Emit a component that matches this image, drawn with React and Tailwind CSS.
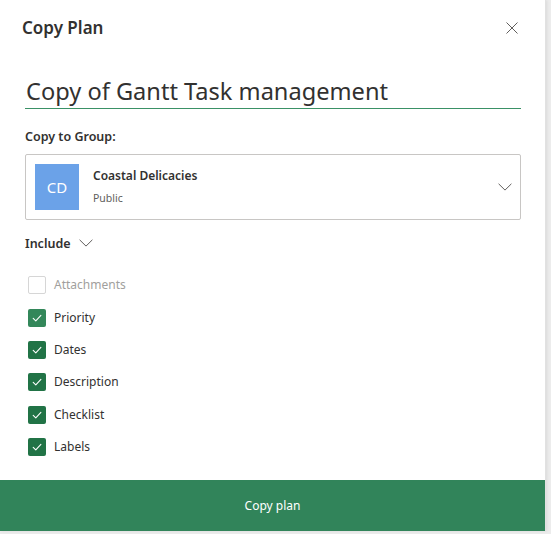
import React from "react";

const font = { fontFamily: '"Segoe UI", "Noto Sans", "Open Sans", sans-serif' };

function Check({ checked, light }) {
  if (!checked) {
    return (
      <span className="w-[18px] h-[18px] rounded-[2px] border border-[#d6d6d6] bg-white shrink-0" />
    );
  }
  return (
    <span
      className={
        "w-[18px] h-[18px] rounded-[2px] flex items-center justify-center shrink-0 " +
        (light ? "bg-[#33875a]" : "bg-[#217346]")
      }
    >
      <svg width="12" height="12" viewBox="0 0 12 12" fill="none">
        <path d="M2.2 6.3 L4.8 8.8 L9.9 3.4" stroke="white" strokeWidth="1.1" strokeLinecap="round" strokeLinejoin="round" />
      </svg>
    </span>
  );
}

function Chevron({ w = 14, h = 8, color = "#605e5c" }) {
  return (
    <svg width={w} height={h} viewBox="0 0 14 8" fill="none">
      <path d="M0.6 0.8 L7 7.1 L13.4 0.8" stroke={color} strokeWidth="1" />
    </svg>
  );
}

export default function App() {
  const items = [
    { label: "Attachments", checked: false },
    { label: "Priority", checked: true, light: true },
    { label: "Dates", checked: true },
    { label: "Description", checked: true },
    { label: "Checklist", checked: true },
    { label: "Labels", checked: true },
  ];
  return (
    <div className="w-[551px] h-[534px] bg-[#ececec] overflow-hidden" style={font}>
      <div className="w-[546px] h-[531px] bg-white flex flex-col border-r border-[#e1e1e1] shadow-[1px_0_3px_rgba(0,0,0,0.08)]">
        <div className="flex items-center justify-between pl-[22px] pr-[27px] pt-[15px] h-[40px]">
          <span className="text-[17px] font-semibold text-[#323130]">Copy Plan</span>
          <svg width="12" height="12" viewBox="0 0 12 12" fill="none">
            <path d="M0.5 0.5 L11.5 11.5 M11.5 0.5 L0.5 11.5" stroke="#605e5c" strokeWidth="1" />
          </svg>
        </div>
        <div className="px-[25px]">
          <div className="mt-[34px] w-[496px] border-b border-[#3a9166] h-[35px] flex items-end">
            <span className="text-[23.6px] leading-[34px] text-[#323130] pl-[1px]">
              Copy of Gantt Task management
            </span>
          </div>
          <div className="mt-[18px] text-[12.5px] font-semibold text-[#323130] leading-[20px]">
            Copy to Group:
          </div>
          <div className="mt-[7px] w-[496px] h-[66px] border border-[#c8c6c4] rounded-[2px] flex items-center pl-[9px] pr-[8px]">
            <div className="w-[44px] h-[46px] bg-[#6ba2e8] flex items-center justify-center text-white text-[15px]">
              CD
            </div>
            <div className="ml-[14px] flex flex-col flex-1">
              <span className="text-[12px] font-semibold text-[#323130] leading-[18px] -mt-[3px]">Coastal Delicacies</span>
              <span className="text-[10.5px] text-[#605e5c] leading-[14px] mt-[6px]">Public</span>
            </div>
            <Chevron />
          </div>
          <div className="mt-[14px] flex items-center h-[20px]">
            <span className="text-[12.5px] font-semibold text-[#323130]">Include</span>
            <span className="ml-[8px] mt-[-2px]">
              <Chevron />
            </span>
          </div>
          <div className="mt-[15px] flex flex-col">
            {items.map((it) => (
              <div key={it.label} className="flex items-center h-[32.4px] pl-[3px]">
                <Check checked={it.checked} light={it.light} />
                <span
                  className={
                    "ml-[8px] text-[12px] " + (it.checked ? "text-[#323130]" : "text-[#a19f9d]")
                  }
                >
                  {it.label}
                </span>
              </div>
            ))}
          </div>
        </div>
        <div className="mt-auto h-[51px] bg-[#31845a] flex items-center justify-center text-white text-[12px]">
          Copy plan
        </div>
      </div>
    </div>
  );
}
